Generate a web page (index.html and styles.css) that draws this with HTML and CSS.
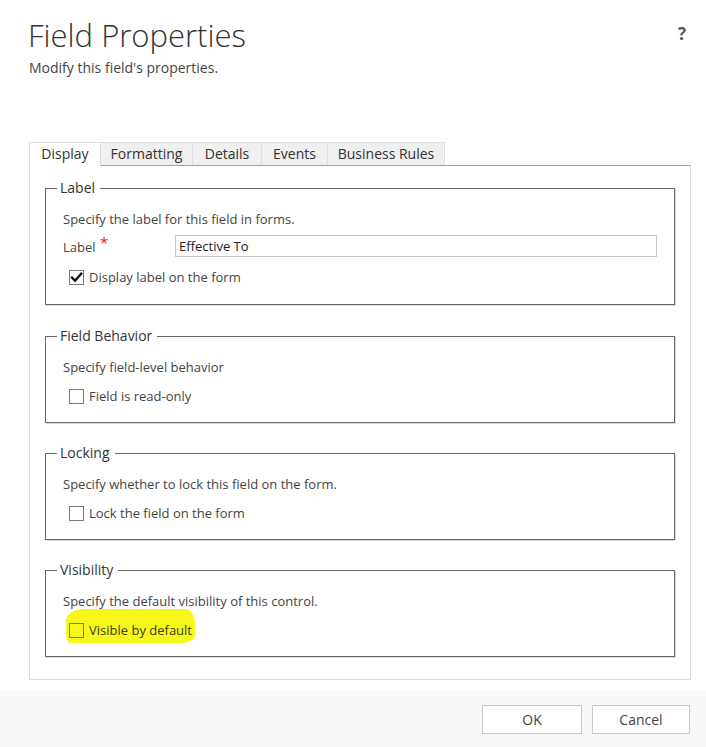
FILE: index.html
```html
<!DOCTYPE html>
<html lang="en">
<head>
<meta charset="utf-8">
<title>Field Properties</title>
<link rel="stylesheet" href="styles.css">
</head>
<body>
<div class="header">
  <div class="heading">
    <h1 class="title">Field Properties</h1>
    <p class="subtitle">Modify this field's properties.</p>
  </div>
  <span class="help">?</span>
</div>

<div class="main">
  <div class="tabs">
    <div class="tab active t-display">Display</div>
    <div class="tab t-formatting">Formatting</div>
    <div class="tab t-details">Details</div>
    <div class="tab t-events">Events</div>
    <div class="tab t-rules">Business Rules</div>
  </div>
  <div class="panel">
    <fieldset class="group first">
      <legend>Label</legend>
      <div class="desc">Specify the label for this field in forms.</div>
      <div class="field-row">
        <span class="field-label">Label <span class="req">*</span></span>
        <input class="text-input" type="text" value="Effective To">
      </div>
      <label class="check-row">
        <span class="box checked"><svg viewBox="0 0 15 15" width="15" height="15"><path d="M3 7.6 L6.1 10.8 L12.2 3.6" fill="none" stroke="#111" stroke-width="2.4" stroke-linecap="square"/></svg></span>
        <span>Display label on the form</span>
      </label>
    </fieldset>

    <fieldset class="group">
      <legend>Field Behavior</legend>
      <div class="desc">Specify field-level behavior</div>
      <label class="check-row">
        <span class="box"></span>
        <span>Field is read-only</span>
      </label>
    </fieldset>

    <fieldset class="group">
      <legend>Locking</legend>
      <div class="desc">Specify whether to lock this field on the form.</div>
      <label class="check-row">
        <span class="box"></span>
        <span>Lock the field on the form</span>
      </label>
    </fieldset>

    <fieldset class="group last">
      <legend>Visibility</legend>
      <div class="desc">Specify the default visibility of this control.</div>
      <label class="check-row highlight">
        <span class="box"></span>
        <span>Visible by default</span>
      </label>
    </fieldset>
  </div>
</div>

<div class="footer">
  <button class="btn ok" type="button">OK</button>
  <button class="btn cancel" type="button">Cancel</button>
</div>
</body>
</html>
```
FILE: styles.css
```css
* { box-sizing: border-box; }

html, body {
  margin: 0;
  padding: 0;
}

body {
  width: 706px;
  height: 747px;
  overflow: hidden;
  display: flex;
  flex-direction: column;
  background: #ffffff;
  color: #444444;
  font-family: "Open Sans", "Noto Sans", sans-serif;
  font-size: 13px;
}

.header {
  display: flex;
  justify-content: space-between;
  align-items: flex-start;
  padding: 15px 20px 0 28px;
  height: 142px;
}

.title {
  margin: 0;
  font-size: 31px;
  line-height: 40px;
  font-weight: 300;
  color: #333333;
}

.subtitle {
  margin: 3px 0 0 1px;
  font-size: 14px;
  line-height: 20px;
  color: #444444;
}

.help {
  margin-top: 7px;
  font-size: 17px;
  font-weight: 700;
  color: #555555;
}

.main {
  padding: 0 15px 0 29px;
}

.tabs {
  display: flex;
  align-items: flex-end;
  position: relative;
  z-index: 1;
}

.tab {
  height: 23px;
  line-height: 22px;
  text-align: center;
  font-size: 14px;
  color: #333333;
  background: #f0f0f0;
  border: 1px solid #dddddd;
  border-bottom: none;
  border-left: none;
}

.tab:first-child {
  border-left: 1px solid #dddddd;
}

.t-display { width: 72px; }
.t-formatting { width: 92px; }
.t-details { width: 69px; }
.t-events { width: 66px; }
.t-rules { width: 117px; }

.tab.active {
  background: #ffffff;
  height: 24px;
  margin-bottom: -1px;
}

.panel {
  border: 1px solid #dddddd;
  border-top-color: #9e9e9e;
  padding: 12px 15px 22px 15px;
}

.group {
  margin: 0 0 20px 0;
  padding: 12px 17px 16px 17px;
  border: 1px solid #686868;
  box-shadow: 1px 1px 0 #d8d8d8;
  min-width: 0;
}

.group.first {
  margin-bottom: 21px;
  padding-bottom: 17px;
}

.group.last {
  margin-bottom: 0;
}

.group legend {
  margin-left: -6px;
  padding: 0 5px 0 3px;
  font-size: 14px;
  line-height: 20px;
  color: #333333;
}

.desc {
  line-height: 18px;
  color: #444444;
}

.field-row {
  display: flex;
  align-items: center;
  margin-top: 7px;
}

.field-label {
  width: 112px;
  flex: none;
  color: #444444;
}

.req {
  color: #e0201b;
  font-size: 15px;
  position: relative;
  top: -4px;
  margin-left: 1px;
}

.text-input {
  flex: 1;
  min-width: 0;
  height: 22px;
  padding: 0 3px;
  border: 1px solid #c6c6c6;
  font-family: inherit;
  font-size: 13px;
  color: #222222;
  background: #ffffff;
  outline: none;
}

.check-row {
  display: flex;
  align-items: center;
  gap: 5px;
  margin: 10px 0 0 6px;
  height: 20px;
  color: #444444;
}

.box {
  width: 15px;
  height: 15px;
  flex: none;
  border: 1px solid #7a7a7a;
  background: #ffffff;
  display: flex;
  align-items: center;
  justify-content: center;
}

.box svg {
  display: block;
  margin: -1px;
}

.highlight {
  position: relative;
  isolation: isolate;
  align-self: flex-start;
  width: max-content;
  color: #3b3b14;
}

.highlight::before {
  content: "";
  position: absolute;
  left: -3px;
  right: -3px;
  top: -11px;
  bottom: -3px;
  background: #f7f71c;
  border-radius: 18px 10px 14px 4px / 12px 14px 8px 10px;
  z-index: -1;
}

.highlight .box {
  background: transparent;
  border-color: #5e9420;
}

.footer {
  margin-top: auto;
  height: 56px;
  background: #f8f8f8;
  display: flex;
  justify-content: flex-end;
  align-items: flex-start;
  gap: 10px;
  padding: 14px 16px 0 0;
}

.btn {
  height: 29px;
  border: 1px solid #c8c8c8;
  background: #ffffff;
  font-family: inherit;
  font-size: 14px;
  color: #444444;
  padding: 0;
}

.btn.ok { width: 100px; }
.btn.cancel { width: 98px; }
```
